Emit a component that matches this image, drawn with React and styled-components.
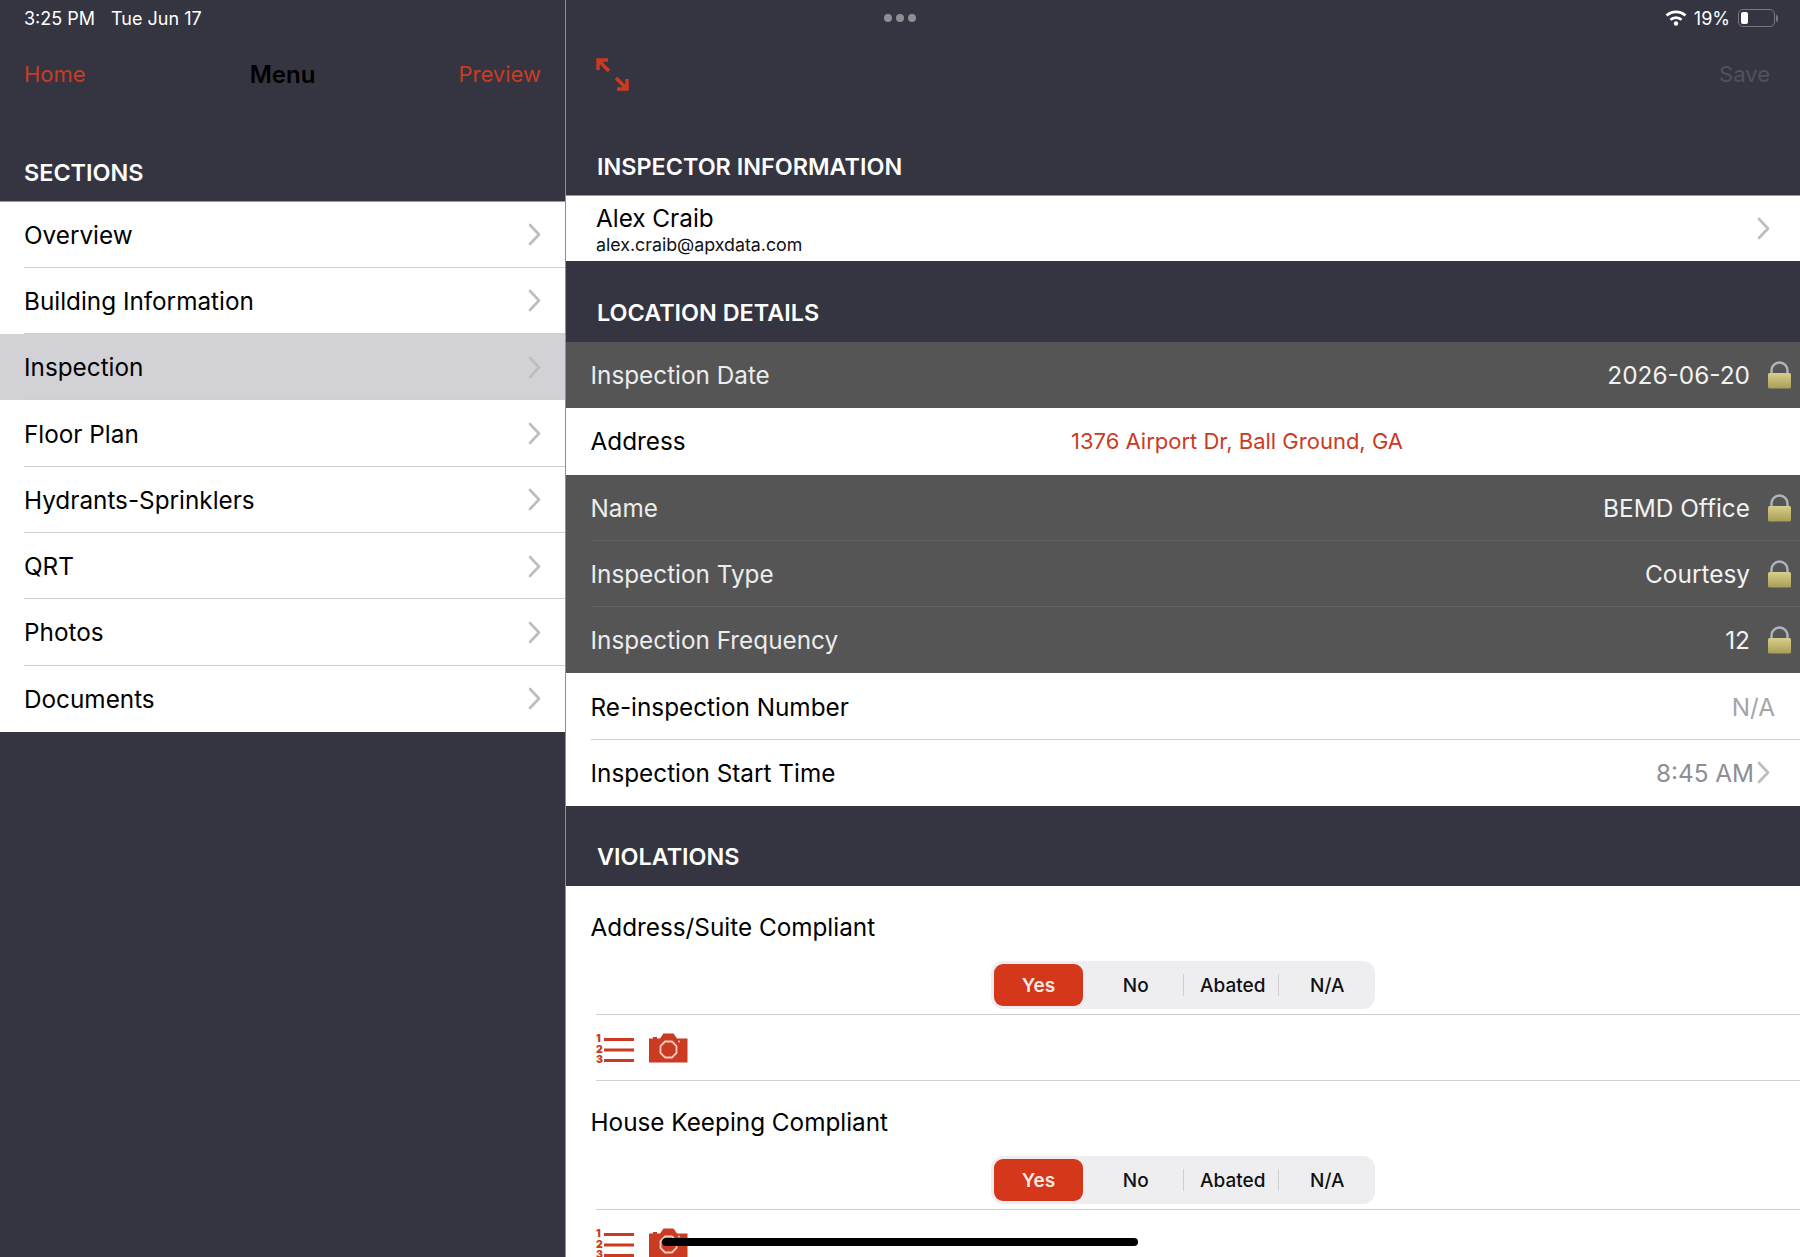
import styled, { createGlobalStyle } from 'styled-components'

const RED = '#cb3b22'

const GlobalStyle = createGlobalStyle`
    html, body {
        margin: 0;
        padding: 0;
        background: #343540;
        font-family: Inter, "Liberation Sans", sans-serif;
    }
`

const menuItems = ['Overview', 'Building Information', 'Inspection', 'Floor Plan', 'Hydrants-Sprinklers', 'QRT', 'Photos', 'Documents']
const options = ['Yes', 'No', 'Abated', 'N/A']

const Chevron = () => (
    <ChevronIcon viewBox="0 0 13 23" fill="none" stroke="#bcbcc1" strokeWidth="2.6" strokeLinecap="round" strokeLinejoin="round">
        <path d="M2 2l9 9.500-9 9.500" />
    </ChevronIcon>
)

const Lock = () => (
    <LockIcon viewBox="0 0 25 28">
        <defs>
            <linearGradient id="lockBody" x1="0" y1="0" x2="0" y2="1">
                <stop offset="0" stopColor="#d8cf8c" />
                <stop offset="1" stopColor="#a89d55" />
            </linearGradient>
        </defs>
        <path d="M4.500 13V9.500a8 8 0 0 1 16 0V13" fill="none" stroke="#aeb4bd" strokeWidth="2.4" />
        <rect x="1" y="12" width="23" height="15.500" rx="1.500" fill="url(#lockBody)" />
    </LockIcon>
)

const ExpandIcon = () => (
    <svg width="33" height="33" viewBox="0 0 33 33" fill="none" stroke={RED} strokeWidth="3.4">
        <path d="M2 12V2H12M2.500 2.500L13 13" />
        <path d="M31 21V31H21M30.500 30.500L20 20" />
    </svg>
)

const ListIcon = () => (
    <ListSvg viewBox="0 0 39 34">
        <text x="0" y="9" fontSize="10.500" fontWeight="900" fontFamily="Inter, sans-serif" fill={RED}>1</text>
        <text x="0" y="19.500" fontSize="10.500" fontWeight="900" fontFamily="Inter, sans-serif" fill={RED}>2</text>
        <text x="0" y="30" fontSize="10.500" fontWeight="900" fontFamily="Inter, sans-serif" fill={RED}>3</text>
        <path d="M8 6.500h30M8 17h30M8 27.500h30" stroke={RED} strokeWidth="3" />
    </ListSvg>
)

const CameraIcon = () => (
    <svg width="39" height="30" viewBox="0 0 39 30">
        <path d="M0 5.500h4V4h4v1.500h3L14.500 .5h10l3.500 5H38.500V29.500H0z" fill={RED} />
        <polygon points="16,8.500 23,8.500 27.500,13 27.500,20 23,24.500 16,24.500 11.500,20 11.500,13" fill="none" stroke="#f5cfc4" strokeWidth="1.800" />
        <circle cx="30" cy="8.500" r="1" fill="#f5cfc4" />
    </svg>
)

const Violation = ({ title }) => (
    <ViolationBlock>
        <ViolationTitle>{title}</ViolationTitle>
        <SegmentRow>
            <Segmented>
                {options.map((option, index) => (
                    <Segment key={option} $active={index === 0} $divider={index === 2 || index === 3}>{option}</Segment>
                ))}
            </Segmented>
        </SegmentRow>
        <ToolRow>
            <ListIcon />
            <CameraIcon />
        </ToolRow>
    </ViolationBlock>
)

export default function App() {
    return (
        <Page>
            <GlobalStyle />
            <Sidebar>
                <StatusBar>
                    <StatusText>3:25 PM</StatusText>
                    <StatusText>Tue Jun 17</StatusText>
                </StatusBar>
                <SideNav>
                    <NavLink>Home</NavLink>
                    <NavTitle>Menu</NavTitle>
                    <NavLink $right>Preview</NavLink>
                </SideNav>
                <SideHeading>SECTIONS</SideHeading>
                <MenuList>
                    {menuItems.map((item) => (
                        <MenuItem key={item} $selected={item === 'Inspection'}>
                            {item}
                            <Chevron />
                        </MenuItem>
                    ))}
                </MenuList>
            </Sidebar>
            <Main>
                <MainStatus>
                    <WifiIcon viewBox="0 0 22 16" fill="none" stroke="#fff" strokeWidth="2.800">
                        <path d="M1.500 5.500a14 14 0 0 1 19 0" />
                        <path d="M5.500 9.800a8 8 0 0 1 11 0" />
                        <circle cx="11" cy="13.500" r="2.200" fill="#fff" stroke="none" />
                    </WifiIcon>
                    <StatusText>19%</StatusText>
                    <Battery><BatteryFill /></Battery>
                    <BatteryCap />
                </MainStatus>
                <MainNav>
                    <ExpandIcon />
                    <SaveLabel>Save</SaveLabel>
                </MainNav>
                <GroupHeading $height={83} $pad={13}>INSPECTOR INFORMATION</GroupHeading>
                <PersonRow>
                    <PersonText>
                        <PersonName>Alex Craib</PersonName>
                        <PersonMail>alex.craib@apxdata.com</PersonMail>
                    </PersonText>
                    <Chevron />
                </PersonRow>
                <GroupHeading $height={81} $pad={14}>LOCATION DETAILS</GroupHeading>
                <LockedRow>
                    <span>Inspection Date</span>
                    <LockedValue>2026-06-20<Lock /></LockedValue>
                </LockedRow>
                <AddressRow>
                    <span>Address</span>
                    <AddressValue>1376 Airport Dr, Ball Ground, GA</AddressValue>
                </AddressRow>
                <LockedRow $line>
                    <span>Name</span>
                    <LockedValue>BEMD Office<Lock /></LockedValue>
                </LockedRow>
                <LockedRow $line>
                    <span>Inspection Type</span>
                    <LockedValue>Courtesy<Lock /></LockedValue>
                </LockedRow>
                <LockedRow>
                    <span>Inspection Frequency</span>
                    <LockedValue>12<Lock /></LockedValue>
                </LockedRow>
                <InfoRow $line>
                    <span>Re-inspection Number</span>
                    <GreyValue>N/A</GreyValue>
                </InfoRow>
                <InfoRow>
                    <span>Inspection Start Time</span>
                    <TimeValue>8:45 AM<Chevron /></TimeValue>
                </InfoRow>
                <GroupHeading $height={80} $pad={14}>VIOLATIONS</GroupHeading>
                <Violation title="Address/Suite Compliant" />
                <Violation title="House Keeping Compliant" />
            </Main>
            <Dots><Dot /><Dot /><Dot /></Dots>
            <HomeBar />
        </Page>
    )
}

const Page = styled.div`
    position: relative;
    display: flex;
    width: 1800px;
    height: 1257px;
    overflow: hidden;
    background: #343540;
`

const Sidebar = styled.div`
    width: 565px;
    flex-shrink: 0;
    border-right: 1px solid #8e8e93;
`

const StatusBar = styled.div`
    display: flex;
    align-items: center;
    gap: 16px;
    height: 36px;
    padding-left: 24px;
`

const StatusText = styled.span`
    color: #fff;
    font-size: 18px;
`

const SideNav = styled.div`
    display: grid;
    grid-template-columns: 1fr auto 1fr;
    align-items: center;
    height: 76px;
    padding: 0 24px;
`

const NavLink = styled.span`
    color: ${RED};
    font-size: 22px;
    text-align: ${({ $right }) => ($right ? 'right' : 'left')};
`

const NavTitle = styled.span`
    color: #000;
    font-size: 24px;
    font-weight: 600;
`

const SideHeading = styled.div`
    box-sizing: border-box;
    height: 89.500px;
    display: flex;
    align-items: flex-end;
    padding: 0 0 13px 24px;
    color: #fff;
    font-size: 23.400px;
    line-height: 30px;
    font-weight: 600;
    border-bottom: 1px solid #9a9aa0;
`

const MenuList = styled.div`
    background: #fff;
`

const MenuItem = styled.div`
    box-sizing: border-box;
    position: relative;
    display: flex;
    align-items: center;
    justify-content: space-between;
    height: 66.300px;
    padding: 0 24px;
    color: #000;
    font-size: 24.300px;
    background: ${({ $selected }) => ($selected ? '#d1d1d6' : '#fff')};

    &:not(:last-child)::after {
        content: '';
        position: absolute;
        left: 24px;
        right: 0;
        bottom: 0;
        height: 1px;
        background: #cfcfd3;
    }
`

const ChevronIcon = styled.svg`
    width: 13px;
    height: 23px;
    flex-shrink: 0;
`

const Main = styled.div`
    flex: 1;
    min-width: 0;
`

const MainStatus = styled.div`
    display: flex;
    align-items: center;
    justify-content: flex-end;
    height: 36px;
    padding-right: 22px;
`

const WifiIcon = styled.svg`
    width: 22px;
    height: 16px;
    margin-right: 7px;
`

const Battery = styled.div`
    box-sizing: border-box;
    width: 37px;
    height: 18px;
    margin-left: 8px;
    padding: 2px;
    border: 1.500px solid #77777f;
    border-radius: 5px;
`

const BatteryFill = styled.div`
    width: 7px;
    height: 100%;
    background: #fff;
    border-radius: 2px;
`

const BatteryCap = styled.div`
    width: 2px;
    height: 7px;
    margin-left: 1px;
    background: #77777f;
    border-radius: 0 2px 2px 0;
`

const MainNav = styled.div`
    display: flex;
    align-items: center;
    justify-content: space-between;
    height: 76px;
    padding: 0 30px;
`

const SaveLabel = styled.span`
    color: #51525a;
    font-size: 22px;
`

const GroupHeading = styled.div`
    box-sizing: border-box;
    height: ${({ $height }) => $height}px;
    display: flex;
    align-items: flex-end;
    padding: 0 0 ${({ $pad }) => $pad}px 31px;
    color: #fff;
    font-size: 23.400px;
    line-height: 30px;
    font-weight: 600;
`

const PersonRow = styled.div`
    box-sizing: border-box;
    display: flex;
    align-items: center;
    justify-content: space-between;
    height: 66px;
    padding: 0 30px;
    background: #fff;
    border-top: 1px solid #9a9aa0;
`

const PersonText = styled.div`
    padding-top: 2px;
`

const PersonName = styled.div`
    font-size: 24.300px;
    line-height: 31px;
    color: #000;
`

const PersonMail = styled.div`
    font-size: 17.800px;
    line-height: 22px;
    color: #111;
`

const RowBase = styled.div`
    box-sizing: border-box;
    position: relative;
    display: flex;
    align-items: center;
    justify-content: space-between;
    height: 66.300px;
    padding-left: 24.500px;
    font-size: 24.300px;

    ${({ $line }) => $line && `
        &::after {
            content: '';
            position: absolute;
            left: 25px;
            right: 0;
            bottom: 0;
            height: 1px;
            background: var(--line);
        }
    `}
`

const LockedRow = styled(RowBase)`
    --line: #626264;
    padding-right: 8px;
    background: #555556;
    color: #ececec;
`

const LockedValue = styled.span`
    display: flex;
    align-items: center;
    gap: 17px;
    font-size: 24.400px;
    color: #f2f2f2;
`

const LockIcon = styled.svg`
    width: 25px;
    height: 28px;
`

const AddressRow = styled(RowBase)`
    background: #fff;
    color: #000;
`

const AddressValue = styled.span`
    margin-right: 397px;
    color: ${RED};
    font-size: 22px;
`

const InfoRow = styled(RowBase)`
    --line: #cfcfd3;
    padding-right: 25px;
    background: #fff;
    color: #000;
`

const GreyValue = styled.span`
    color: #a5a5a9;
`

const TimeValue = styled.span`
    display: flex;
    align-items: center;
    gap: 3px;
    margin-right: 5px;
    color: #8e8e93;
`

const ViolationBlock = styled.div`
    background: #fff;
`

const ViolationTitle = styled.div`
    box-sizing: border-box;
    height: 75px;
    display: flex;
    align-items: center;
    padding: 6px 0 0 24.500px;
    color: #000;
    font-size: 24.300px;
`

const SegmentRow = styled.div`
    box-sizing: border-box;
    display: flex;
    justify-content: center;
    height: 54px;
    margin-left: 30px;
    padding-right: 30px;
    border-bottom: 1px solid #cfcfd3;
`

const Segmented = styled.div`
    display: grid;
    grid-template-columns: repeat(4, 1fr);
    box-sizing: border-box;
    width: 384px;
    height: 48px;
    padding: 3px;
    background: #eeeef0;
    border-radius: 12px;
`

const Segment = styled.div`
    position: relative;
    display: flex;
    align-items: center;
    justify-content: center;
    margin-right: ${({ $active }) => ($active ? '5.500px' : '0')};
    padding-left: ${({ $divider }) => ($divider ? '5px' : '0')};
    font-size: 19px;
    font-weight: ${({ $active }) => ($active ? 600 : 500)};
    color: ${({ $active }) => ($active ? '#fbe9e4' : '#111')};
    background: ${({ $active }) => ($active ? '#d4371a' : 'transparent')};
    border-radius: 9px;

    ${({ $divider }) => $divider && `
        &::before {
            content: '';
            position: absolute;
            left: 0;
            top: 10px;
            bottom: 10px;
            width: 1px;
            background: #d0d0d4;
        }
    `}
`

const ToolRow = styled.div`
    box-sizing: border-box;
    display: flex;
    align-items: center;
    gap: 14px;
    height: 66px;
    margin-left: 30px;
    border-bottom: 1px solid #cfcfd3;
`

const ListSvg = styled.svg`
    width: 39px;
    height: 34px;
    margin-bottom: -4px;
`

const Dots = styled.div`
    position: absolute;
    top: 14px;
    left: 884px;
    display: flex;
    gap: 4px;
`

const Dot = styled.span`
    width: 8px;
    height: 8px;
    border-radius: 50%;
    background: #8e8e95;
`

const HomeBar = styled.div`
    position: absolute;
    left: 662px;
    top: 1238px;
    width: 476px;
    height: 8px;
    background: #000;
    border-radius: 4px;
`
